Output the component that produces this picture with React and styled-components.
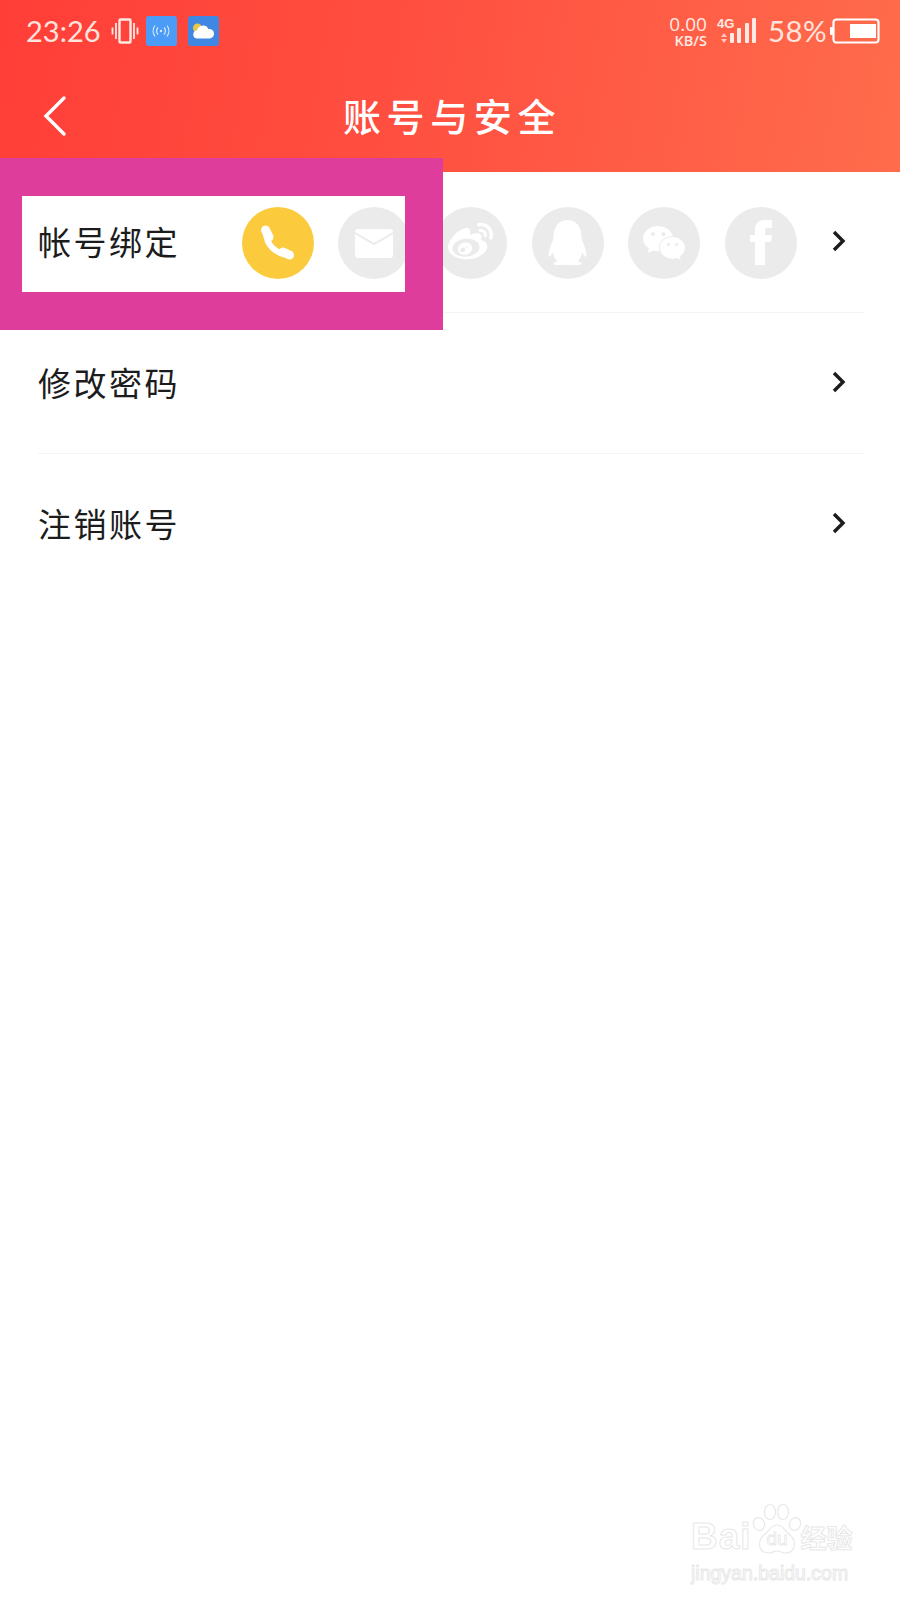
import React from 'react';
import styled, { createGlobalStyle } from 'styled-components';
import { FaWeibo, FaQq, FaWeixin } from 'react-icons/fa';

const GlobalStyle = createGlobalStyle`
  html, body {
    margin: 0;
    padding: 0;
    background: #fff;
  }
  body {
    font-family: "Noto Sans CJK SC", "Liberation Sans", sans-serif;
  }
`;

const Page = styled.div`
  position: relative;
  width: 900px;
  height: 1600px;
  background: #fff;
  overflow: hidden;
`;

const Header = styled.header`
  height: 172px;
  background: linear-gradient(100deg, #ff3e38 0%, #ff4f40 45%, #ff6c4c 100%);
  color: #fff;
`;

const StatusBar = styled.div`
  height: 62px;
  display: flex;
  align-items: center;
  justify-content: space-between;
  padding: 0 20px 0 26px;
`;

const StatusGroup = styled.div`
  display: flex;
  align-items: center;
`;

const Time = styled.span`
  font-family: Lato, sans-serif;
  font-weight: 400;
  font-size: 29px;
  line-height: 32px;
  color: #ffe3dd;
  margin-right: 10px;
`;

const Badge = styled.div`
  width: 31px;
  height: 30px;
  border-radius: 3px;
  background: ${(p) => p.$color};
  display: flex;
  align-items: center;
  justify-content: center;
  margin-left: ${(p) => p.$left || 0}px;
`;

const Speed = styled.div`
  display: flex;
  flex-direction: column;
  align-items: flex-end;
  font-family: "Open Sans", sans-serif;
  color: #ffe9e4;
  margin-right: 10px;
  span:first-child {
    font-size: 19px;
    line-height: 20px;
  }
  span:last-child {
    font-size: 14.5px;
    line-height: 14px;
    font-weight: 600;
  }
`;

const Percent = styled.span`
  font-family: Lato, sans-serif;
  font-weight: 400;
  font-size: 29.5px;
  line-height: 32px;
  letter-spacing: 0.4px;
  color: #ffe3dd;
  margin: 0 3px 0 11px;
`;

const NavBar = styled.div`
  height: 110px;
  display: flex;
  align-items: flex-start;
  padding: 0 0 0 43px;
  position: relative;
`;

const BackIcon = styled.svg`
  width: 24px;
  height: 42px;
  margin-top: 33px;
  flex: none;
`;

const Title = styled.h1`
  flex: 1;
  margin: 25px 0 0 -67px;
  text-align: center;
  font-size: 38px;
  font-weight: 500;
  line-height: 56px;
  letter-spacing: 5.600px;
  color: #fff;
  padding-left: 4px;
`;

const List = styled.div`
  display: flex;
  flex-direction: column;
  margin: 0 35px 0 38px;
`;

const Row = styled.div`
  height: 141px;
  box-sizing: border-box;
  display: flex;
  align-items: center;
  padding-right: 19px;
  padding-bottom: 2px;
  border-bottom: 1px solid ${(p) => (p.$last ? 'transparent' : '#f4f4f4')};
`;

const Label = styled.span`
  font-size: 33px;
  line-height: 46px;
  letter-spacing: 2.500px;
  color: #1c1c1c;
`;

const Accounts = styled.div`
  display: flex;
  gap: 24.7px;
  margin: 3px 35px 0 auto;
`;

const Circle = styled.div`
  width: 72px;
  height: 72px;
  border-radius: 50%;
  background: ${(p) => (p.$active ? '#fbcb3d' : '#ebebeb')};
  color: #fff;
  display: flex;
  align-items: center;
  justify-content: center;
  font-size: ${(p) => p.$size || 44}px;
`;

const Chevron = styled.svg`
  width: 14px;
  height: 22px;
  flex: none;
  margin-left: ${(p) => (p.$auto ? 'auto' : '0')};
`;

/* annotation frame painted on the screenshot */
const Frame = styled.div`
  position: absolute;
  left: 0;
  top: 158px;
  width: 443px;
  height: 172px;
  box-sizing: border-box;
  border-style: solid;
  border-color: #de3d9b;
  border-width: 38px 38px 38px 22px;
`;

const Watermark = styled.div`
  position: absolute;
  left: 691px;
  top: 1503px;
  width: 165px;
  color: #fff;
  -webkit-text-stroke: 1px #e8e8e8;
`;

const MarkTop = styled.div`
  display: flex;
  align-items: flex-end;
  height: 52px;
`;

const MarkWord = styled.span`
  font-family: "Liberation Sans", sans-serif;
  font-weight: 700;
  font-size: 37px;
  line-height: 36px;
  letter-spacing: 1px;
`;

const MarkCn = styled.span`
  font-size: 26px;
  line-height: 36px;
  font-weight: 700;
  margin-left: -1px;
`;

const MarkUrl = styled.div`
  font-family: "Liberation Sans", sans-serif;
  font-size: 19.5px;
  line-height: 24px;
  margin-top: 6px;
  white-space: nowrap;
`;

const Vibrate = () => (
  <svg width="28" height="26" viewBox="0 0 28 26" fill="none" stroke="#ffe9e4">
    <rect x="8.500" y="1.500" width="11" height="23" rx="1" strokeWidth="2.400" />
    <path d="M5 5v16M1.500 9.500v7M23 5v16M26.500 9.500v7" strokeWidth="1.800" />
  </svg>
);

const Hotspot = () => (
  <svg width="20" height="14" viewBox="0 0 20 14" fill="none" stroke="#d8eaff" strokeWidth="1.200">
    <circle cx="10" cy="7" r="1.200" fill="#d8eaff" stroke="none" />
    <path d="M7 3.500a5 5 0 0 0 0 7M13 3.500a5 5 0 0 1 0 7M4 1.500a9 9 0 0 0 0 11M16 1.500a9 9 0 0 1 0 11" />
  </svg>
);

const Weather = () => (
  <svg width="24" height="20" viewBox="0 0 24 20">
    <circle cx="6.500" cy="7" r="4.500" fill="#e9c94a" />
    <path
      d="M6.500 17.500a4 4 0 0 1-.4-8A6 6 0 0 1 17.400 8 4.800 4.800 0 0 1 19 17.500z"
      fill="#fff"
    />
  </svg>
);

const Signal = () => (
  <svg width="40" height="28" viewBox="0 0 40 28" fill="#ffe9e4">
    <text x="0" y="11" fontFamily="Liberation Sans, sans-serif" fontWeight="700" fontSize="13">
      4G
    </text>
    <path d="M4 20l3-4 3 4zM4 22l3 4 3-4z" fillOpacity="0.75" />
    <rect x="13" y="16" width="4" height="10" rx="1" />
    <rect x="20" y="11" width="4" height="15" rx="1" />
    <rect x="28" y="6" width="4" height="20" rx="1" />
    <rect x="35" y="1" width="4" height="25" rx="1" />
  </svg>
);

const Battery = () => (
  <svg width="50" height="26" viewBox="0 0 50 26">
    <rect x="0" y="9" width="3" height="8" rx="1" fill="#fff" />
    <rect x="3.500" y="1.500" width="45" height="23" rx="3" fill="none" stroke="#fff" strokeWidth="2.200" />
    <rect x="20" y="6" width="26" height="14" fill="#fff" />
  </svg>
);

const Phone = () => (
  <svg width="72" height="72" viewBox="0 0 72 72" fill="none" stroke="#fff" strokeLinecap="round">
    <path d="M24 25C24 37 33 47 47 48" strokeWidth="6" />
    <path d="M23.500 23l3.500 7" strokeWidth="9" />
    <path d="M41 45l6.500 3" strokeWidth="9" />
  </svg>
);

const Mail = () => (
  <svg width="72" height="72" viewBox="0 0 72 72">
    <rect x="17" y="22" width="38" height="29" rx="3" fill="#fff" />
    <path d="M17 26l19 11 19-11" fill="none" stroke="#ebebeb" strokeWidth="2" />
  </svg>
);

const FacebookF = () => (
  <svg width="72" height="72" viewBox="0 0 72 72" fill="#fff">
    <path d="M30 58V35h-5v-7h5v-5c0-7 4-10 10-10h7v8h-5c-1.500 0-2 1-2 3v4h7l-1 7h-6v23z" />
  </svg>
);

const Paw = () => (
  <svg width="50" height="52" viewBox="0 0 50 52" fill="#fff" stroke="#e8e8e8" strokeWidth="1.200">
    <ellipse cx="7" cy="21" rx="5.500" ry="6.500" transform="rotate(-20 7 21)" />
    <ellipse cx="18" cy="9" rx="5.500" ry="7.500" />
    <ellipse cx="31" cy="9" rx="5.500" ry="7.500" />
    <ellipse cx="43" cy="21" rx="5.500" ry="6.500" transform="rotate(20 43 21)" />
    <path d="M25 22c-6 0-8 6-13 10-6 5-7 18 5 18 4 0 5-2 8-2s5 2 8 2c12 0 11-13 5-18-5-4-7-10-13-10z" />
    <text
      x="25"
      y="42"
      textAnchor="middle"
      fontFamily="Liberation Sans, sans-serif"
      fontSize="19"
      strokeWidth="0.800"
    >
      du
    </text>
  </svg>
);

const RowArrow = ({ $auto }) => (
  <Chevron $auto={$auto} viewBox="0 0 14 22" fill="none" stroke="#1c1c1c" strokeWidth="3.400">
    <path d="M2 2l9 9-9 9" />
  </Chevron>
);

const App = () => {
  return (
    <Page>
      <GlobalStyle />
      <Header>
        <StatusBar>
          <StatusGroup>
            <Time>23:26</Time>
            <Vibrate />
            <Badge $color="#4a9cf6" $left={7}>
              <Hotspot />
            </Badge>
            <Badge $color="#3f87e2" $left={11}>
              <Weather />
            </Badge>
          </StatusGroup>
          <StatusGroup>
            <Speed>
              <span>0.00</span>
              <span>KB/S</span>
            </Speed>
            <Signal />
            <Percent>58%</Percent>
            <Battery />
          </StatusGroup>
        </StatusBar>
        <NavBar>
          <BackIcon viewBox="0 0 24 42" fill="none" stroke="#fff" strokeWidth="3.400" strokeLinecap="round">
            <path d="M21 3L3 21l18 18" />
          </BackIcon>
          <Title>账号与安全</Title>
        </NavBar>
      </Header>
      <List>
        <Row>
          <Label>帐号绑定</Label>
          <Accounts>
            <Circle $active>
              <Phone />
            </Circle>
            <Circle>
              <Mail />
            </Circle>
            <Circle $size={45}>
              <FaWeibo />
            </Circle>
            <Circle $size={45}>
              <FaQq />
            </Circle>
            <Circle $size={44}>
              <FaWeixin />
            </Circle>
            <Circle>
              <FacebookF />
            </Circle>
          </Accounts>
          <RowArrow />
        </Row>
        <Row>
          <Label>修改密码</Label>
          <RowArrow $auto />
        </Row>
        <Row $last>
          <Label>注销账号</Label>
          <RowArrow $auto />
        </Row>
      </List>
      <Frame />
      <Watermark>
        <MarkTop>
          <MarkWord>Bai</MarkWord>
          <Paw />
          <MarkCn>经验</MarkCn>
        </MarkTop>
        <MarkUrl>jingyan.baidu.com</MarkUrl>
      </Watermark>
    </Page>
  );
};

export default App;
